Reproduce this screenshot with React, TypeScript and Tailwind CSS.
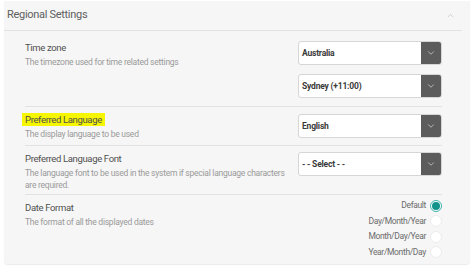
import { ChevronDown, ChevronUp } from "lucide-react";

const font = { fontFamily: "Roboto, 'Liberation Sans', sans-serif" };

function Select({ value }: { value: string }) {
  return (
    <div className="flex h-[24px] w-[144px] overflow-hidden rounded-[3px] border border-[#d6d6d6] bg-white">
      <div className="flex flex-1 items-center pl-[3px] text-[8.5px] font-bold tracking-[-0.2px] text-[#3a3a3a]">{value}</div>
      <div className="flex w-[20px] items-center justify-center bg-[#5c5c5c]">
        <ChevronDown className="h-[10px] w-[10px] text-[#e8e8e8]" strokeWidth={1.5} />
      </div>
    </div>
  );
}

function Radio({ label, checked }: { label: string; checked?: boolean }) {
  return (
    <div className="flex h-[15.5px] items-center justify-end gap-[4px]">
      <span className="text-[8.5px] tracking-[-0.35px] text-[#6b6b6b]">{label}</span>
      {checked ? (
        <span className="flex h-[12px] w-[12px] items-center justify-center rounded-full border border-[#3bb3ad] bg-white">
          <span className="h-[8px] w-[8px] rounded-full bg-[#14928c]" />
        </span>
      ) : (
        <span className="h-[12px] w-[12px] rounded-full border border-[#ececec] bg-white" />
      )}
    </div>
  );
}

function Label({ title, desc, highlight }: { title: string; desc: string; highlight?: boolean }) {
  return (
    <div className="w-[266px]">
      <div className="text-[9.5px] leading-[12px] tracking-[-0.35px] text-[#505050]">
        {highlight ? (
          <span className="-ml-[3px] bg-[#f6f600] px-[3px] py-[1px]">{title}</span>
        ) : (
          title
        )}
      </div>
      <div className="mt-[2px] text-[8.5px] leading-[12px] tracking-[-0.25px] text-[#9a9a9a]">{desc}</div>
    </div>
  );
}

export default function App() {
  return (
    <div className="min-h-screen bg-white pt-[1px]" style={font}>
      <div className="mx-[4px] rounded-b-[4px] bg-[#f6f6f6] pb-[4px] shadow-[0_1px_1px_rgba(0,0,0,0.08)]">
        <div className="mr-[8px] flex h-[30px] items-center justify-between border-b border-[#e2e2e2] pl-[3px] pr-[7px]">
          <span className="text-[11px] tracking-[-0.3px] text-[#606060]">Regional Settings</span>
          <ChevronUp className="h-[9px] w-[9px] text-[#c4c4c4]" strokeWidth={2} />
        </div>

        <div className="pl-[21px] pr-[28px]">
          <div className="flex items-start justify-between border-b border-[#e2e2e2] pb-[8px] pt-[10px]">
            <div className="pt-[1px]">
              <Label title="Time zone" desc="The timezone used for time related settings" />
            </div>
            <div className="flex flex-col gap-[9px]">
              <Select value="Australia" />
              <Select value="Sydney (+11:00)" />
            </div>
          </div>

          <div className="flex items-start justify-between border-b border-[#e2e2e2] pb-[5px] pt-[6px]">
            <div className="pt-[1px]">
              <Label title="Preferred Language" desc="The display language to be used" highlight />
            </div>
            <div className="pt-[1px]">
              <Select value="English" />
            </div>
          </div>

          <div className="flex items-start justify-between border-b border-[#e2e2e2] pb-[3px] pt-[6px]">
            <div className="pt-[1px]">
              <Label
                title="Preferred Language Font"
                desc="The language font to be used in the system if special language characters are required."
              />
            </div>
            <Select value="- - Select - -" />
          </div>

          <div className="flex items-start justify-between pt-[3px]">
            <div className="pt-[4px]">
              <Label title="Date Format" desc="The format of all the displayed dates" />
            </div>
            <div className="flex flex-col">
              <Radio label="Default" checked />
              <Radio label="Day/Month/Year" />
              <Radio label="Month/Day/Year" />
              <Radio label="Year/Month/Day" />
            </div>
          </div>
        </div>
      </div>
    </div>
  );
}
